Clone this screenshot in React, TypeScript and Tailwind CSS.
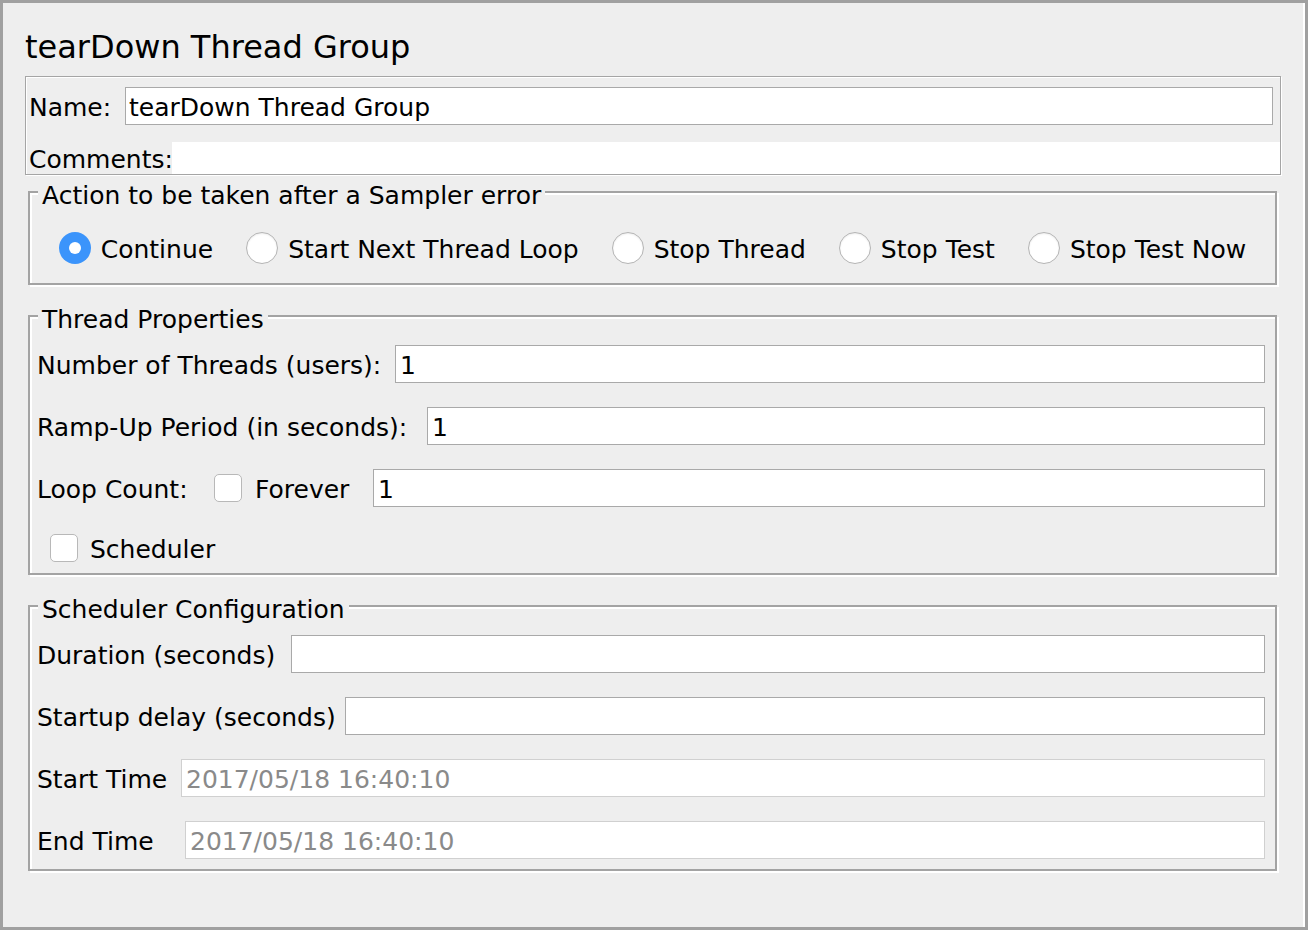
import type { ReactNode } from 'react';

const font = { fontFamily: '"DejaVu Sans", "Liberation Sans", sans-serif' };

interface GroupBoxProps {
  title: string;
  className?: string;
  children: ReactNode;
}

// Java-style etched titled border
function GroupBox({ title, className = '', children }: GroupBoxProps) {
  return (
    <div
      className={`relative ml-[3px] mr-[4px] border-2 border-[#a3a3a3] shadow-[inset_2px_2px_0_#ffffff,2px_2px_0_#ffffff] ${className}`}
    >
      <span className="absolute left-[8px] -top-[10px] bg-[#eeeeee] px-[4px] text-[25px] leading-[25px] text-black whitespace-nowrap">
        {title}
      </span>
      {children}
    </div>
  );
}

function Radio({ label, checked = false }: { label: string; checked?: boolean }) {
  return (
    <div className="flex items-center gap-[10px]">
      {checked ? (
        <span className="flex h-[32px] w-[32px] items-center justify-center rounded-full bg-[#3b94fb]">
          <span className="h-[12px] w-[12px] rounded-full bg-white" />
        </span>
      ) : (
        <span className="h-[32px] w-[32px] rounded-full border border-[#b4b4b4] bg-white shadow-[inset_0_1px_2px_rgba(0,0,0,0.08)]" />
      )}
      <span className="pt-[3px] text-[25px] leading-[29px] whitespace-nowrap">{label}</span>
    </div>
  );
}

function Checkbox() {
  return <span className="h-[28px] w-[28px] shrink-0 rounded-[5px] border border-[#b8b8b8] bg-white" />;
}

interface FieldRowProps {
  label: string;
  labelWidth: string;
  value?: string;
  disabled?: boolean;
}

function FieldRow({ label, labelWidth, value = '', disabled = false }: FieldRowProps) {
  return (
    <div className="flex h-[38px] items-center">
      <span className={`${labelWidth} shrink-0 pt-[3px] text-[25px] leading-[32px] whitespace-nowrap`}>{label}</span>
      <div
        className={`flex h-[38px] flex-1 items-center border bg-white px-[4px] pt-[3px] text-[25px] leading-[32px] ${
          disabled ? 'border-[#d0d0d0] text-[#8a8a8a]' : 'border-[#a9a9a9] text-black'
        }`}
      >
        {value}
      </div>
    </div>
  );
}

export default function App() {
  return (
    <div
      style={font}
      className="h-[930px] w-[1308px] overflow-hidden border-[3px] border-[#a0a0a0] bg-[#eeeeee] text-black shadow-[inset_-2px_0_0_#ffffff]"
    >
      <div className="pl-[22px] pr-[24px] pt-[25px]">
        <h1 className="text-[32px] leading-[38px] font-normal whitespace-nowrap">tearDown Thread Group</h1>

        {/* Name / comments panel */}
        <div className="mt-[10px] border border-[#a5a5a5] shadow-[inset_1px_1px_0_#ffffff,1px_1px_0_#ffffff]">
          <div className="flex h-[48px] items-end pl-[3px] pr-[7px]">
            <span className="flex h-[38px] w-[96px] shrink-0 items-center pt-[3px] text-[25px] leading-[32px]">Name:</span>
            <div className="flex h-[38px] flex-1 items-center border border-[#a9a9a9] bg-white px-[3px] pt-[3px] text-[25px] leading-[32px] whitespace-nowrap">
              tearDown Thread Group
            </div>
          </div>
          <div className="mt-[17px] flex h-[32px] items-center pl-[3px]">
            <span className="w-[143px] shrink-0 pt-[3px] text-[25px] leading-[29px]">Comments:</span>
            <div className="h-[32px] flex-1 bg-white" />
          </div>
        </div>

        <GroupBox title="Action to be taken after a Sampler error" className="mt-[16px]">
          <div className="flex h-[90px] items-start justify-center gap-[33px] pt-[39px]">
            <Radio label="Continue" checked />
            <Radio label="Start Next Thread Loop" />
            <Radio label="Stop Thread" />
            <Radio label="Stop Test" />
            <Radio label="Stop Test Now" />
          </div>
        </GroupBox>

        <GroupBox title="Thread Properties" className="mt-[30px]">
          <div className="flex flex-col gap-[24px] pl-[7px] pr-[10px] pt-[28px]">
            <FieldRow label="Number of Threads (users):" labelWidth="w-[358px]" value="1" />
            <FieldRow label="Ramp-Up Period (in seconds):" labelWidth="w-[390px]" value="1" />
            <div className="flex h-[38px] items-center">
              <span className="w-[177px] shrink-0 pt-[3px] text-[25px] leading-[32px] whitespace-nowrap">Loop Count:</span>
              <Checkbox />
              <span className="w-[131px] shrink-0 pl-[13px] pt-[3px] text-[25px] leading-[32px]">Forever</span>
              <div className="flex h-[38px] flex-1 items-center border border-[#a9a9a9] bg-white px-[4px] pt-[3px] text-[25px] leading-[32px]">
                1
              </div>
            </div>
          </div>
          <div className="ml-[20px] mt-[27px] flex h-[28px] items-center gap-[12px]">
            <Checkbox />
            <span className="pt-[3px] text-[25px] leading-[25px]">Scheduler</span>
          </div>
          <div className="h-[11px]" />
        </GroupBox>

        <GroupBox title="Scheduler Configuration" className="mt-[30px]">
          <div className="flex flex-col gap-[24px] pb-[10px] pl-[7px] pr-[10px] pt-[28px]">
            <FieldRow label="Duration (seconds)" labelWidth="w-[254px]" />
            <FieldRow label="Startup delay (seconds)" labelWidth="w-[308px]" />
            <FieldRow label="Start Time" labelWidth="w-[144px]" value="2017/05/18 16:40:10" disabled />
            <FieldRow label="End Time" labelWidth="w-[148px]" value="2017/05/18 16:40:10" disabled />
          </div>
        </GroupBox>
      </div>
    </div>
  );
}
